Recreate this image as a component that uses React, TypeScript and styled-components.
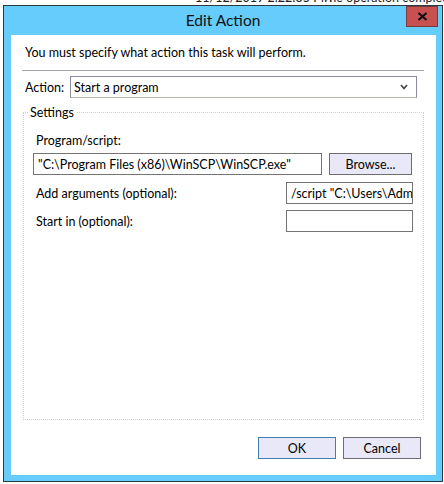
import styled, { createGlobalStyle } from "styled-components";

const Global = createGlobalStyle`
  html, body {
    margin: 0;
    padding: 0;
    background: #fff;
    overflow: hidden;
  }
  body {
    font-family: Lato, "Noto Sans", sans-serif;
    font-size: 12.5px;
    color: #000;
  }
`;

const Desktop = styled.div`
  position: relative;
  width: 444px;
  height: 484px;
  overflow: hidden;
  background: #fff;
`;

const BackRow = styled.div`
  display: flex;
  padding-left: 195px;
  margin-top: -10px;
  color: #222;
  white-space: nowrap;

  span:first-child {
    width: 127px;
  }
`;

const Window = styled.div`
  position: absolute;
  left: 3px;
  top: 5px;
  width: 438px;
  height: 475px;
  border: 1px solid #2a3a44;
  background: #66ccfb;
  display: flex;
  flex-direction: column;
`;

const TitleBar = styled.div`
  height: 29px;
  display: grid;
  grid-template-columns: 1fr auto 1fr;
  align-items: start;
`;

const Title = styled.div`
  grid-column: 2;
  padding-top: 5px;
  font-size: 15.5px;
  color: #111;
`;

const Close = styled.div`
  grid-column: 3;
  justify-self: end;
  margin-right: 4px;
  width: 30px;
  height: 19px;
  background: #c75050;
  border: 1px solid #7a3a3a;
  display: flex;
  align-items: center;
  justify-content: center;
`;

const Content = styled.div`
  flex: 1;
  margin: 0 6px 6px 7px;
  background: #fff;
  display: flex;
  flex-direction: column;
`;

const Intro = styled.div`
  padding: 10px 0 0 14px;
  height: 25px;
`;

const Rule = styled.div`
  margin: 0 12px 0 11px;
  border-top: 1px solid #a0a0a8;
`;

const ActionRow = styled.div`
  display: flex;
  align-items: center;
  margin: 5px 19px 0 14px;
`;

const Label = styled.span`
  white-space: nowrap;
`;

const Select = styled.div`
  margin-left: auto;
  width: 347px;
  height: 22px;
  box-sizing: border-box;
  border: 1px solid #8a8aa4;
  border-bottom-color: #b6b6a8;
  display: flex;
  align-items: center;
  padding: 0 8px 0 3px;
`;

const Group = styled.fieldset`
  margin: 7px 12px 0 12px;
  padding: 16px 11px 0 9px;
  height: 315px;
  box-sizing: border-box;
  border: 1px dotted #c4ccf4;
  display: flex;
  flex-direction: column;
  min-width: 0;

  legend {
    padding: 0 2px;
    margin-left: -5px;
  }
`;

const FieldLabel = styled.div<{ $lift?: boolean }>`
  padding-left: 3px;
  margin-top: ${(p) => (p.$lift ? "-3px" : "0")};
  white-space: nowrap;
`;

const Row = styled.div<{ $top: number }>`
  display: flex;
  align-items: center;
  margin-top: ${(p) => p.$top}px;
`;

const Input = styled.div<{ $w: number; $end?: boolean }>`
  width: ${(p) => p.$w}px;
  height: 22px;
  box-sizing: border-box;
  border: 1px solid #747474;
  background: #fff;
  padding: 0 4px;
  margin-left: ${(p) => (p.$end ? "auto" : "0")};
  margin-right: ${(p) => (p.$end ? "-1px" : "0")};
  display: flex;
  align-items: center;
  white-space: nowrap;
  overflow: hidden;
  flex-shrink: 0;
`;

const Button = styled.div<{ $default?: boolean; $w?: number; $end?: boolean }>`
  width: ${(p) => p.$w ?? 78}px;
  height: 22px;
  box-sizing: border-box;
  border: 1px solid ${(p) => (p.$default ? "#3c7fb1" : "#6e6e6e")};
  background: #e8e8f8;
  margin-left: ${(p) => (p.$end ? "auto" : "0")};
  display: flex;
  align-items: center;
  justify-content: center;
  flex-shrink: 0;
`;

const Footer = styled.div`
  margin-top: auto;
  display: flex;
  justify-content: flex-end;
  gap: 7px;
  padding: 0 15px 16px 0;
`;

export default function App() {
  return (
    <Desktop>
      <Global />
      <BackRow>
        <span>11/12/2019 2:22:35 PM</span>
        <span>The operation completed</span>
      </BackRow>
      <Window>
        <TitleBar>
          <Title>Edit Action</Title>
          <Close>
            <svg width="11" height="9" viewBox="0 0 11 9">
              <path d="M1.5 1 L9.5 8 M9.5 1 L1.5 8" stroke="#111" strokeWidth="2.2" />
            </svg>
          </Close>
        </TitleBar>
        <Content>
          <Intro>You must specify what action this task will perform.</Intro>
          <Rule />
          <ActionRow>
            <Label>Action:</Label>
            <Select>
              <span>Start a program</span>
              <svg width="8" height="6" viewBox="0 0 8 6" style={{ marginLeft: "auto" }}>
                <path d="M1 1 L4 4.5 L7 1" stroke="#444" strokeWidth="1.6" fill="none" />
              </svg>
            </Select>
          </ActionRow>
          <Group>
            <legend>Settings</legend>
            <FieldLabel $lift>Program/script:</FieldLabel>
            <Row $top={5}>
              <Input $w={289}>"C:\Program Files (x86)\WinSCP\WinSCP.exe"</Input>
              <Button $end $w={83}>Browse...</Button>
            </Row>
            <Row $top={7}>
              <FieldLabel>Add arguments (optional):</FieldLabel>
              <Input $w={127} $end>
                /script "C:\Users\Administrator\script.txt"
              </Input>
            </Row>
            <Row $top={6}>
              <FieldLabel>Start in (optional):</FieldLabel>
              <Input $w={127} $end />
            </Row>
          </Group>
          <Footer>
            <Button $default>OK</Button>
            <Button>Cancel</Button>
          </Footer>
        </Content>
      </Window>
    </Desktop>
  );
}
